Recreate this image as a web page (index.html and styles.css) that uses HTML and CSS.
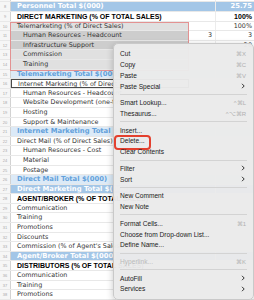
FILE: index.html
```html
<!DOCTYPE html>
<html lang="en">
<head>
    <meta charset="UTF-8">
    <title>Marketing budget - context menu</title>
    <link rel="stylesheet" href="styles.css">
</head>
<body>
    <div class="screen">
        <div class="sheet">
            <div class="row"><span class="num"></span><span class="a"></span><span class="b"></span><span class="c"></span></div>
            <div class="row total"><span class="num">8</span><span class="a">Personnel Total $(000)</span><span class="b"></span><span class="c">25.75</span></div>
            <div class="row head"><span class="num">9</span><span class="a">DIRECT MARKETING (% OF TOTAL SALES)</span><span class="b"></span><span class="c">100%</span></div>
            <div class="row sel"><span class="num">10</span><span class="a">Telemarketing (% of Direct Sales)</span><span class="b"></span><span class="c">100%</span></div>
            <div class="row sel dark"><span class="num">11</span><span class="a in">Human Resources - Headcount</span><span class="b">3</span><span class="c">3</span></div>
            <div class="row sel dark"><span class="num">12</span><span class="a in">Infrastructure Support</span><span class="b"></span><span class="c">20</span></div>
            <div class="row sel"><span class="num">13</span><span class="a in">Commission</span><span class="b"></span><span class="c"></span></div>
            <div class="row sel"><span class="num">14</span><span class="a in">Training</span><span class="b"></span><span class="c"></span></div>
            <div class="row sub"><span class="num">15</span><span class="a">Telemarketing Total $(000)</span><span class="b"></span><span class="c"></span></div>
            <div class="row active"><span class="num">16</span><span class="a">Internet Marketing (% of Direct Sales)</span><span class="b"></span><span class="c"></span></div>
            <div class="row"><span class="num">17</span><span class="a in">Human Resources - Headcount</span><span class="b"></span><span class="c"></span></div>
            <div class="row"><span class="num">18</span><span class="a in">Website Development (one-time)</span><span class="b"></span><span class="c"></span></div>
            <div class="row"><span class="num">19</span><span class="a in">Hosting</span><span class="b"></span><span class="c"></span></div>
            <div class="row"><span class="num">20</span><span class="a in">Support &amp; Maintenance</span><span class="b"></span><span class="c"></span></div>
            <div class="row sub"><span class="num">21</span><span class="a">Internet Marketing Total $(000)</span><span class="b"></span><span class="c"></span></div>
            <div class="row"><span class="num">22</span><span class="a">Direct Mail (% of Direct Sales)</span><span class="b"></span><span class="c"></span></div>
            <div class="row"><span class="num">23</span><span class="a in">Human Resources - Cost</span><span class="b"></span><span class="c"></span></div>
            <div class="row"><span class="num">24</span><span class="a in">Material</span><span class="b"></span><span class="c"></span></div>
            <div class="row"><span class="num">25</span><span class="a in">Postage</span><span class="b"></span><span class="c"></span></div>
            <div class="row sub"><span class="num">26</span><span class="a">Direct Mail Total $(000)</span><span class="b"></span><span class="c"></span></div>
            <div class="row total"><span class="num">27</span><span class="a">Direct Marketing Total $(000)</span><span class="b"></span><span class="c"></span></div>
            <div class="row head"><span class="num">28</span><span class="a">AGENT/BROKER (% OF TOTAL SALES)</span><span class="b"></span><span class="c"></span></div>
            <div class="row"><span class="num">29</span><span class="a">Communication</span><span class="b"></span><span class="c"></span></div>
            <div class="row"><span class="num">30</span><span class="a">Training</span><span class="b"></span><span class="c"></span></div>
            <div class="row"><span class="num">31</span><span class="a">Promotions</span><span class="b"></span><span class="c"></span></div>
            <div class="row"><span class="num">32</span><span class="a">Discounts</span><span class="b"></span><span class="c"></span></div>
            <div class="row"><span class="num">33</span><span class="a">Commission (% of Agent's Sales)</span><span class="b"></span><span class="c"></span></div>
            <div class="row total"><span class="num">34</span><span class="a">Agent/Broker Total $(000)</span><span class="b"></span><span class="c"></span></div>
            <div class="row head"><span class="num">35</span><span class="a">DISTRIBUTORS (% OF TOTAL SALES)</span><span class="b"></span><span class="c"></span></div>
            <div class="row"><span class="num">36</span><span class="a">Communication</span><span class="b"></span><span class="c"></span></div>
            <div class="row"><span class="num">37</span><span class="a">Training</span><span class="b"></span><span class="c"></span></div>
            <div class="row"><span class="num">38</span><span class="a">Promotions</span><span class="b"></span><span class="c"></span></div>
        </div>

        <!-- annotation around the selected rows -->
        <div class="mark-rows"></div>

        <div class="menu">
            <div class="item"><span>Cut</span><span class="key">⌘X</span></div>
            <div class="item"><span>Copy</span><span class="key">⌘C</span></div>
            <div class="item"><span>Paste</span><span class="key">⌘V</span></div>
            <div class="item"><span>Paste Special</span><svg class="arrow" viewBox="0 0 4 6"><path d="M1 0.8 L3.2 3 L1 5.2"/></svg></div>
            <div class="sep"></div>
            <div class="item"><span>Smart Lookup...</span><span class="key">^⌘L</span></div>
            <div class="item"><span>Thesaurus...</span><span class="key">^⌥⌘R</span></div>
            <div class="sep"></div>
            <div class="item"><span>Insert...</span></div>
            <div class="item marked"><span>Delete...</span><span class="ring"></span></div>
            <div class="item"><span>Clear Contents</span></div>
            <div class="sep"></div>
            <div class="item"><span>Filter</span><svg class="arrow" viewBox="0 0 4 6"><path d="M1 0.8 L3.2 3 L1 5.2"/></svg></div>
            <div class="item"><span>Sort</span><svg class="arrow" viewBox="0 0 4 6"><path d="M1 0.8 L3.2 3 L1 5.2"/></svg></div>
            <div class="sep"></div>
            <div class="item"><span>New Comment</span></div>
            <div class="item"><span>New Note</span></div>
            <div class="sep"></div>
            <div class="item"><span>Format Cells...</span><span class="key">⌘1</span></div>
            <div class="item"><span>Choose from Drop-down List...</span></div>
            <div class="item"><span>Define Name...</span></div>
            <div class="sep"></div>
            <div class="item off"><span>Hyperlink...</span><span class="key">⌘K</span></div>
            <div class="sep"></div>
            <div class="item"><span>AutoFill</span><svg class="arrow" viewBox="0 0 4 6"><path d="M1 0.8 L3.2 3 L1 5.2"/></svg></div>
            <div class="item"><span>Services</span><svg class="arrow" viewBox="0 0 4 6"><path d="M1 0.8 L3.2 3 L1 5.2"/></svg></div>
        </div>
    </div>
</body>
</html>
```

FILE: styles.css
```css
body {
    margin: 0;
    background: #fff;
    overflow: hidden;
}
.screen {
    position: relative;
    width: 254px;
    height: 300px;
    overflow: hidden;
}
.sheet {
    margin-top: -7.2px;
    font-family: "DejaVu Sans", Verdana, sans-serif;
    font-size: 6.4px;
    color: #333;
}
.row {
    display: flex;
    height: 9.6px;
    line-height: 9.6px;
    box-sizing: border-box;
    border-bottom: 1px solid #e8e8e8;
}
.row span {
    white-space: nowrap;
    overflow: hidden;
    box-sizing: border-box;
}
.num {
    width: 11px;
    flex: none;
    font-family: "Liberation Sans", Arial, sans-serif;
    font-size: 4px;
    font-weight: normal;
    color: #a8a8a8;
    text-align: center;
    background: #f6f6f6;
    border-right: 1px solid #d2d2d2;
}
.a {
    width: 178px;
    flex: none;
    padding-left: 6px;
}
.a.in {
    padding-left: 12px;
}
.b {
    width: 27px;
    flex: none;
    text-align: right;
    padding-right: 3px;
    border-right: 1px solid #ececec;
}
.c {
    width: 38px;
    flex: none;
    text-align: right;
    padding-right: 2px;
}

.total {
    background: #a3c6e7;
    color: #fff;
    font-weight: bold;
    font-size: 6.8px;
}
.sub {
    background: #dceaf7;
    color: #63a1db;
    font-weight: bold;
    font-size: 6.8px;
}
.head {
    color: #000;
    font-family: "Liberation Sans", Arial, sans-serif;
    font-weight: bold;
    font-size: 7px;
}
.sel .a {
    background: #e0e0e0;
}
.sel.dark .a {
    background: #cdcdcd;
}
.active .a {
    border: 1px solid #4a4a4a;
}

.mark-rows {
    position: absolute;
    left: 10px;
    top: 22px;
    width: 179px;
    height: 49px;
    border: 1px solid #e39292;
    box-sizing: border-box;
}

.menu {
    position: absolute;
    left: 113px;
    top: 43px;
    width: 139px;
    padding: 4.6px 0;
    background: rgba(234, 234, 234, 0.97);
    border: 0.5px solid #c9c9c9;
    border-radius: 5px;
    box-shadow: 0 2px 7px rgba(0, 0, 0, 0.22);
    font-family: "Liberation Sans", Arial, sans-serif;
    font-size: 6.6px;
    color: #222;
}
.item {
    position: relative;
    display: flex;
    justify-content: space-between;
    align-items: center;
    height: 10.7px;
    padding: 0 7px 0 6px;
}
.key {
    color: #b0b0b0;
    font-size: 6px;
}
.off {
    color: #b9b9b9;
}
.arrow {
    width: 4px;
    height: 6px;
    margin-right: 1px;
}
.arrow path {
    fill: none;
    stroke: #333;
    stroke-width: 1;
}
.sep {
    height: 1px;
    margin: 2.55px 6px;
    background: #d3d3d3;
}
.ring {
    position: absolute;
    left: 0;
    top: -1px;
    width: 37px;
    height: 15px;
    border: 2px solid #e3402e;
    border-radius: 4px;
    box-sizing: border-box;
}
```
